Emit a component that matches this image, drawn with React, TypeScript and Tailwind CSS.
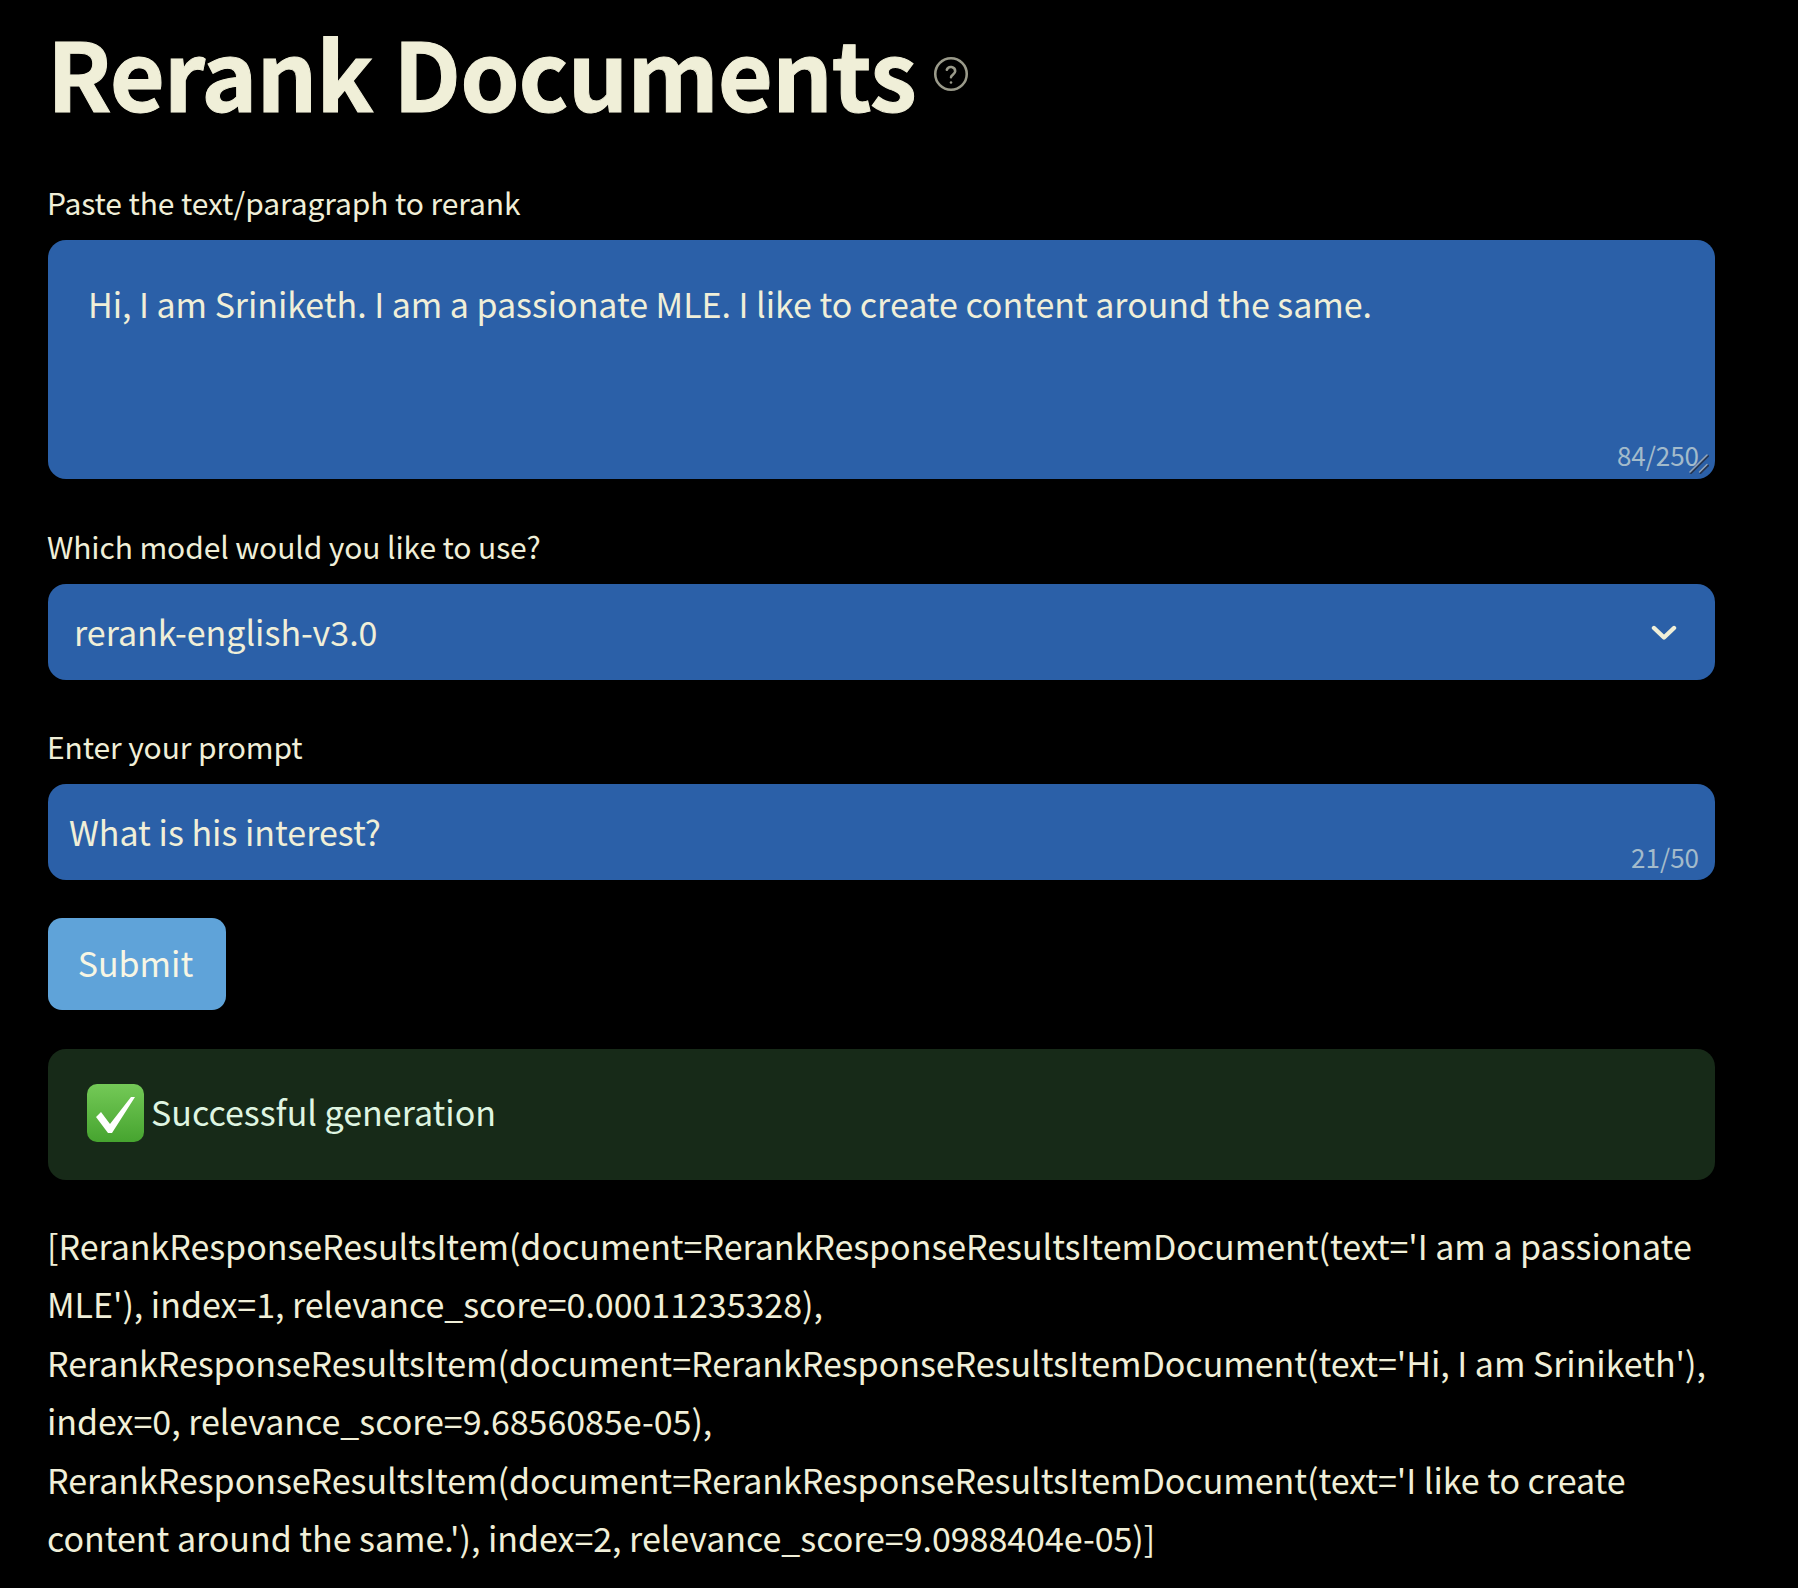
import React from "react";

const font = "[font-family:'Noto_Sans_CJK_SC','Noto_Sans',sans-serif]";

function Label({ children }: { children: React.ReactNode }) {
  return <div className="text-[30px] leading-[42px] h-[46px] tracking-[-0.1px] -ml-[0.5px]">{children}</div>;
}

export default function App() {
  return (
    <div className={`${font} bg-black min-h-[1588px] h-[1588px] overflow-hidden text-[#f0efd8] pl-[47.5px] pr-[83px]`}>
      <div className="flex items-center h-[152px] pb-[10px] -ml-[0.5px]">
        <h1 className="text-[95px] leading-[142px] font-bold tracking-[-1px] [-webkit-text-stroke:1px_#f0efd8]">Rerank Documents</h1>
        <svg width="36" height="36" viewBox="0 0 24 24" fill="none" stroke="#9a9a8a" strokeWidth="1.7" strokeLinecap="round" strokeLinejoin="round" className="ml-[17px] mt-[6px]">
          <circle cx="12" cy="12" r="10.5" />
          <path d="M9.2 9.2a2.9 2.9 0 0 1 5.6 1c0 1.9-2.8 2.6-2.8 4" />
          <path d="M12 17.6h.01" />
        </svg>
      </div>

      <div className="mt-[29px]"><Label>Paste the text/paragraph to rerank</Label></div>
      <div className="relative mt-[13px] h-[239px] rounded-[18px] bg-[#2b60a8] pl-[40.5px] pt-[39px] text-[34px] leading-[50px] tracking-[-0.04px]">
        Hi, I am Sriniketh. I am a passionate MLE. I like to create content around the same.
        <span className="absolute right-[16px] bottom-[4px] text-[26px] leading-[40px] text-[#a3bbcb]">84/250</span>
        <svg width="22" height="22" viewBox="0 0 22 22" className="absolute right-[5px] bottom-[4px]" fill="none" strokeLinecap="round">
          <path d="M3 20 L20 3" stroke="#26344f" strokeWidth="2" />
          <path d="M2 19 L19 2" stroke="#93a5b8" strokeWidth="1.6" />
          <path d="M12.5 20 L20 12.5" stroke="#26344f" strokeWidth="2" />
          <path d="M11.5 19 L19 11.5" stroke="#93a5b8" strokeWidth="1.4" />
        </svg>
      </div>

      <div className="mt-[46px]"><Label>Which model would you like to use?</Label></div>
      <div className="mt-[13px] h-[96px] rounded-[18px] bg-[#2b60a8] flex items-center justify-between pl-[26.5px] pr-[38px] text-[34px]">
        <span className="mb-[2px]">rerank-english-v3.0</span>
        <svg width="26" height="16" viewBox="0 0 26 16" fill="none" stroke="#f0efd8" strokeWidth="4.4" strokeLinecap="round" strokeLinejoin="round" className="mt-[1px]">
          <path d="M3 3 L13 12.5 L23 3" />
        </svg>
      </div>

      <div className="mt-[45px]"><Label>Enter your prompt</Label></div>
      <div className="relative mt-[13px] h-[96px] rounded-[18px] bg-[#2b60a8] flex items-center pl-[21.5px] text-[34px]">
        <span className="mb-[2px]">What is his interest?</span>
        <span className="absolute right-[16px] bottom-[3px] text-[26px] leading-[40px] text-[#a3bbcb]">21/50</span>
      </div>

      <button className="block mt-[38px] w-[178px] h-[92px] rounded-[14px] bg-[#5fa3d9] text-[34px] text-[#f7f6e4] pb-[3px] pr-[2px]">Submit</button>

      <div className="mt-[39px] h-[131px] rounded-[18px] bg-[#172a18] flex items-center pl-[39.5px] text-[34px] text-[#dff5e1]">
        <svg width="58" height="58" viewBox="0 0 58 58" className="shrink-0 mr-[6px] mb-[4px]">
          <defs>
            <linearGradient id="g" x1="0" y1="0" x2="0" y2="1">
              <stop offset="0" stopColor="#74c957" />
              <stop offset="1" stopColor="#46a42f" />
            </linearGradient>
          </defs>
          <rect x="0" y="0" width="57" height="58" rx="10" fill="url(#g)" />
          <path d="M9 33 L14 28 L23 40 L44 13 L48 13 L25 49 L21 49 Z" fill="#ffffff" />
        </svg>
        <span className="mb-[6px]">Successful generation</span>
      </div>

      <div className="mt-[37px] -ml-[0.5px] text-[34px] leading-[58.4px] tracking-[-0.035px] whitespace-nowrap">
        <div>[RerankResponseResultsItem(document=RerankResponseResultsItemDocument(text='I am a passionate</div>
        <div>MLE'), index=1, relevance_score=0.00011235328),</div>
        <div>RerankResponseResultsItem(document=RerankResponseResultsItemDocument(text='Hi, I am Sriniketh'),</div>
        <div>index=0, relevance_score=9.6856085e-05),</div>
        <div>RerankResponseResultsItem(document=RerankResponseResultsItemDocument(text='I like to create</div>
        <div>content around the same.'), index=2, relevance_score=9.0988404e-05)]</div>
      </div>
    </div>
  );
}
